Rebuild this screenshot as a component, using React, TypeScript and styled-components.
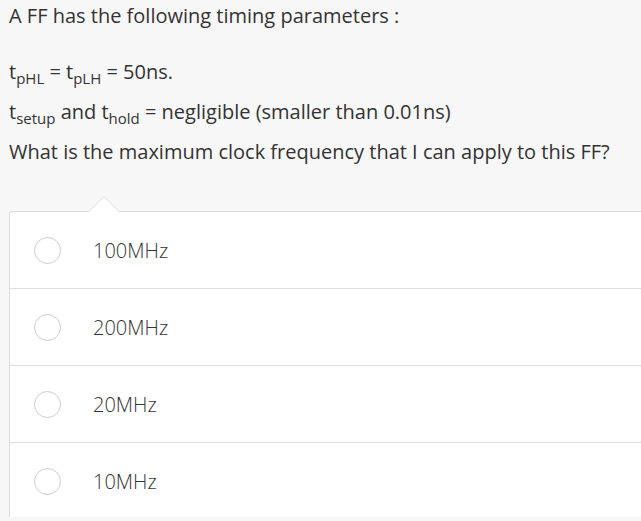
import * as React from "react";
import styled, { createGlobalStyle } from "styled-components";

const GlobalStyle = createGlobalStyle`
    html, body {
        margin: 0;
        padding: 0;
        background: #f7f7f7;
    }
    body {
        font-family: "Open Sans", "DejaVu Sans", sans-serif;
        color: #333;
        overflow: hidden;
    }
`;

const Page = styled.div`
    width: 641px;
    height: 521px;
    padding: 0 0 0 9px;
    box-sizing: border-box;
`;

const Question = styled.div`
    font-size: 20px;
    line-height: 40px;
    margin-top: -4px;
`;

const Para = styled.p<{gap?:number}>`
    margin: 0 0 ${props=>props.gap ?? 0}px 0;
`;

const Sub = styled.sub`
    font-size: 15px;
    line-height: 0;
    vertical-align: -5px;
`;

const Card = styled.div`
    position: relative;
    margin-top: 39px;
    background: #fff;
    border: 1px solid #ddd;
    border-right: none;
    border-radius: 3px 0 0 3px;
    &::before{
        content: "";
        position: absolute;
        top: -16px;
        left: 78px;
        border: 16px solid transparent;
        border-top: none;
        border-bottom-color: #ddd;
    }
    &::after{
        content: "";
        position: absolute;
        top: -15px;
        left: 79px;
        border: 15px solid transparent;
        border-top: none;
        border-bottom-color: #fff;
    }
`;

const Row = styled.label`
    display: flex;
    align-items: center;
    height: 76px;
    border-top: 1px solid #ddd;
    &:first-child{
        border-top: none;
    }
`;

const Radio = styled.span`
    width: 27px;
    height: 27px;
    border: 1px solid #ccc;
    border-radius: 50%;
    margin-left: 24px;
    box-sizing: border-box;
    background: #fff;
`;

const OptionText = styled.span`
    margin-left: 32px;
    font-size: 20px;
    font-weight: 300;
    color: #333;
`;

const options = ["100MHz", "200MHz", "20MHz", "10MHz"];

export default function App(){
    return(
        <Page>
            <GlobalStyle />
            <Question>
                <Para gap={16}>A FF has the following timing parameters :</Para>
                <Para>t<Sub>pHL</Sub> = t<Sub>pLH</Sub> = 50ns.</Para>
                <Para>t<Sub>setup</Sub> and t<Sub>hold</Sub> = negligible (smaller than 0.01ns)</Para>
                <Para>What is the maximum clock frequency that I can apply to this FF?</Para>
            </Question>
            <Card>
                {options.map(o=>(
                    <Row key={o}>
                        <Radio />
                        <OptionText>{o}</OptionText>
                    </Row>
                ))}
            </Card>
        </Page>
    )
}
